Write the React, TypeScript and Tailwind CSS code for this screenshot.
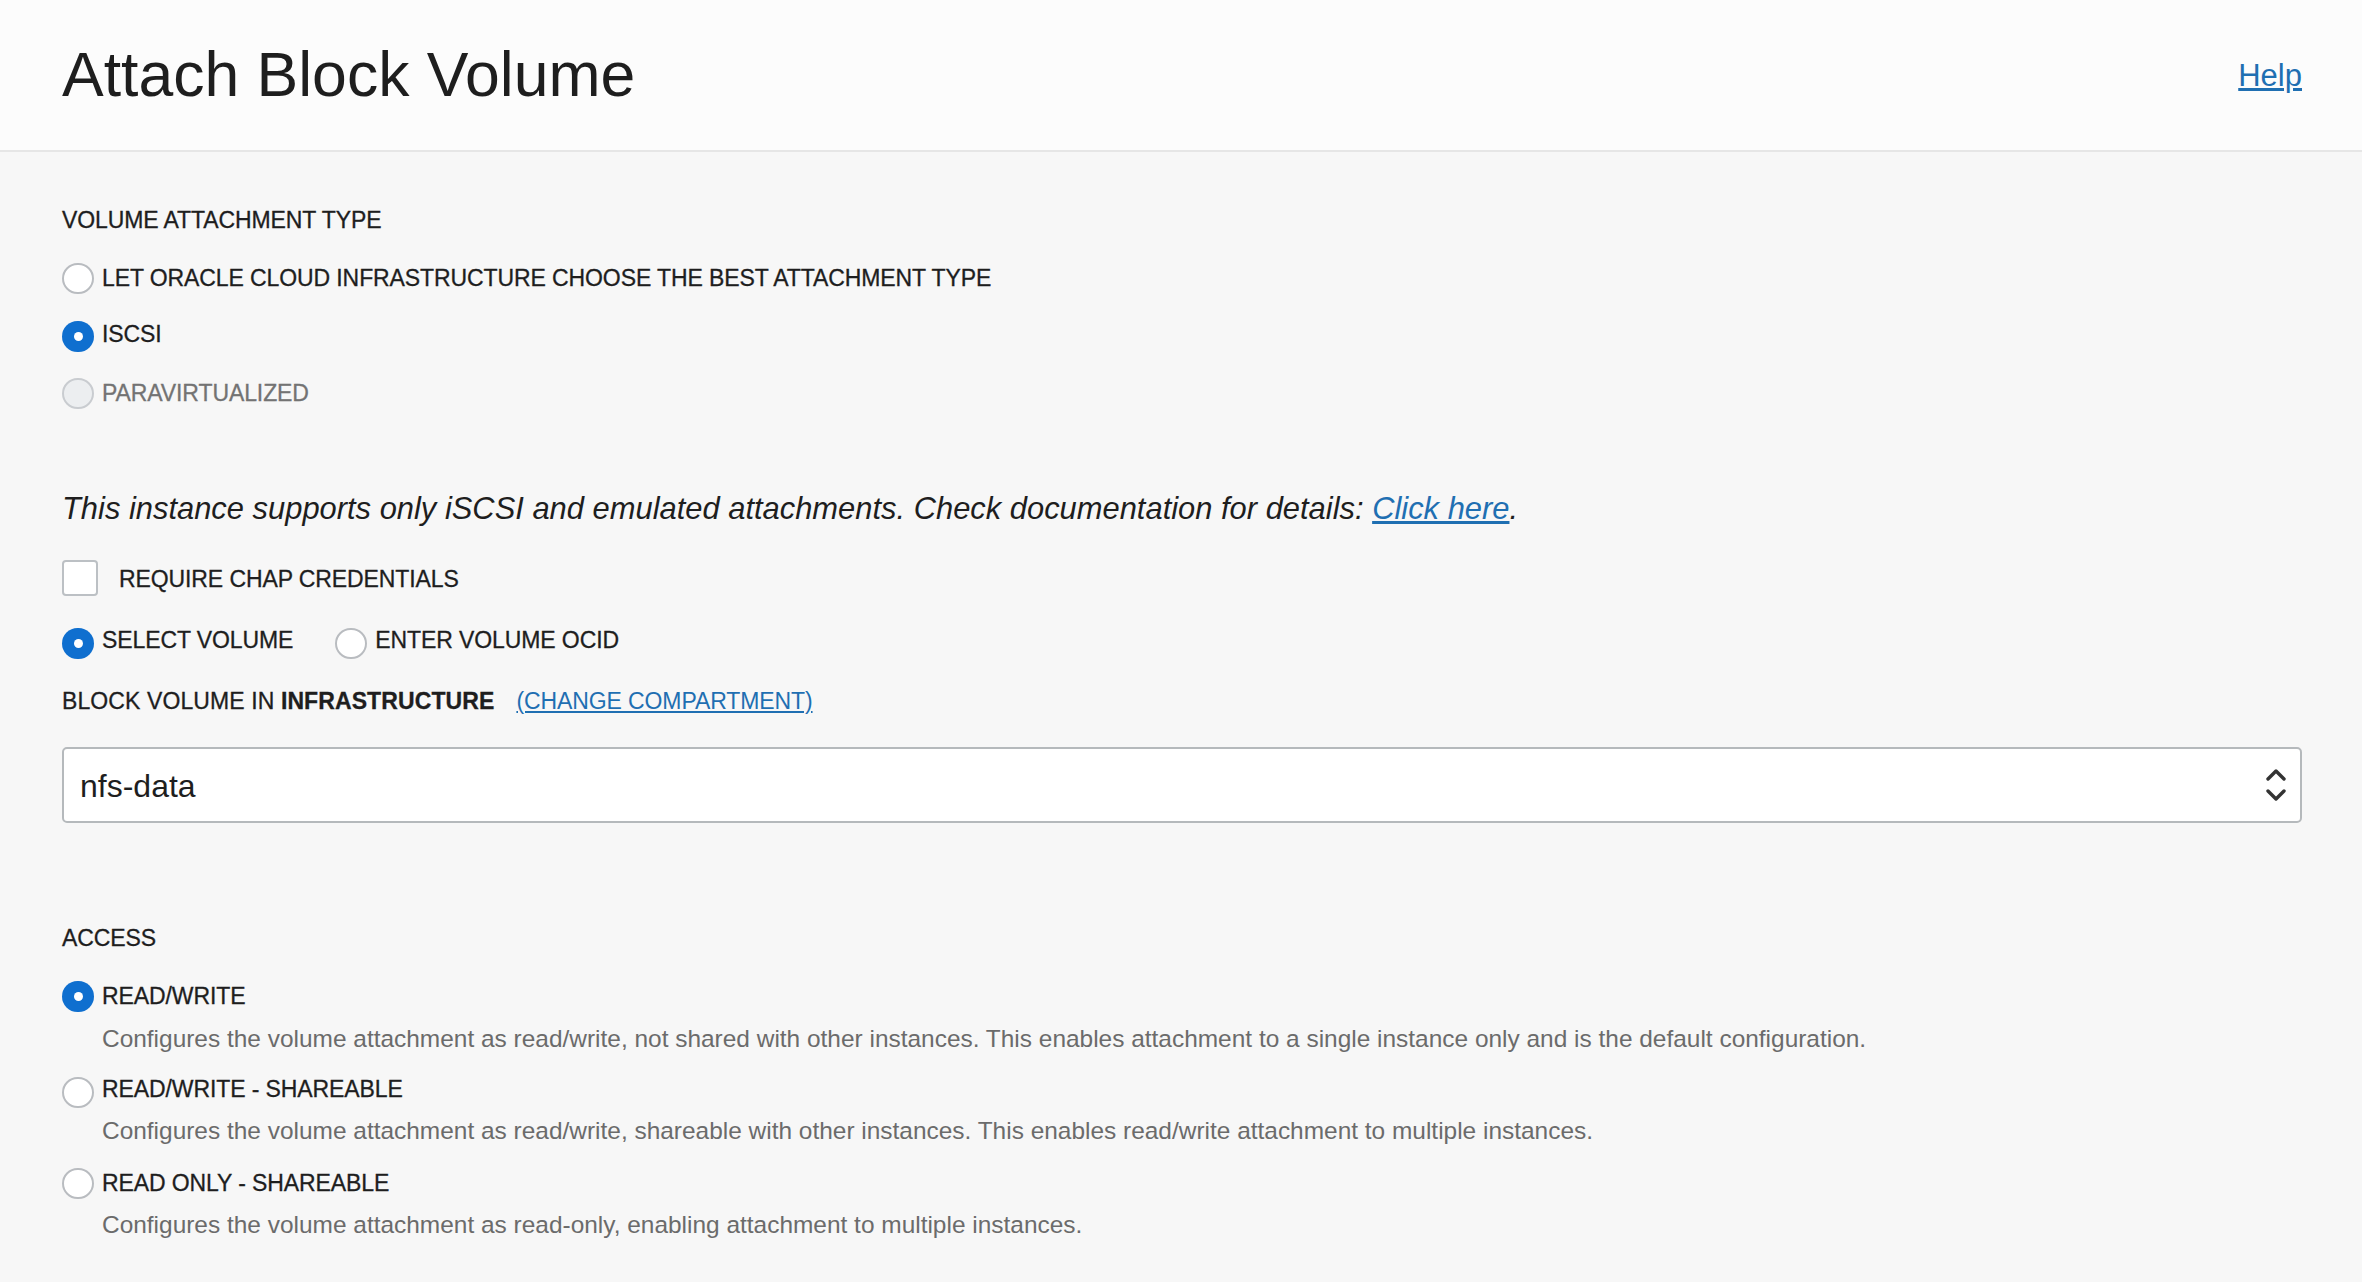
import { ReactNode } from "react";

type RadioProps = {
  state?: "off" | "on" | "disabled";
};

function Radio({ state = "off" }: RadioProps) {
  if (state === "on") {
    return (
      <span className="flex h-[31px] w-[32px] shrink-0 items-center justify-center rounded-full bg-[#0f6fcf]">
        <span className="h-[9px] w-[9px] rounded-full bg-white" />
      </span>
    );
  }
  return (
    <span
      className={
        state === "disabled"
          ? "h-[31px] w-[32px] shrink-0 rounded-full border-2 border-[#c9ccd0] bg-[#eceef0]"
          : "h-[31px] w-[32px] shrink-0 rounded-full border-2 border-[#b9bcc0] bg-white"
      }
    />
  );
}

function Label({ children, muted, className = "" }: { children: ReactNode; muted?: boolean; className?: string }) {
  const color = muted ? "text-[#737373]" : "text-[#1e1e1e]";
  return (
    <span className={`text-[23px] leading-[28px] tracking-[-0.1px] [-webkit-text-stroke:0.3px] ${color} ${className}`}>
      {children}
    </span>
  );
}

function Desc({ children, className = "" }: { children: ReactNode; className?: string }) {
  return <p className={`ml-[40px] text-[24.45px] leading-[30px] text-[#6b6b6b] ${className}`}>{children}</p>;
}

function Chevrons() {
  return (
    <svg width="20" height="36" viewBox="0 0 20 36" fill="none" stroke="#333333" strokeWidth="3.4" strokeLinecap="round" strokeLinejoin="round">
      <path d="M2 12 L10 4 L18 12" />
      <path d="M2 24 L10 32 L18 24" />
    </svg>
  );
}

export default function App() {
  return (
    <div className="min-h-[1282px] bg-[#f7f7f7] font-['Liberation_Sans',Arial,sans-serif]">
      <header className="flex h-[152px] items-center justify-between border-b-2 border-[#e6e6e6] bg-[#fcfcfc] px-[60px]">
        <h1 className="pb-[3px] pl-[2px] text-[62.5px] leading-[72px] text-[#1e1e1e]">Attach Block Volume</h1>
        <a className="pt-[1px] text-[31px] leading-[36px] text-[#1f6fb2] underline">Help</a>
      </header>

      <main className="px-[62px] pr-[60px]">
        <section className="pt-[54px]">
          <h2 className="font-normal"><Label>VOLUME ATTACHMENT TYPE</Label></h2>
          <div className="mt-[28px] flex items-center gap-[8px]"><Radio /><Label className="pb-[1px]">LET ORACLE CLOUD INFRASTRUCTURE CHOOSE THE BEST ATTACHMENT TYPE</Label></div>
          <div className="mt-[26px] flex items-center gap-[8px]"><Radio state="on" /><Label className="pb-[5px]">ISCSI</Label></div>
          <div className="mt-[25px] flex items-center gap-[8px]"><Radio state="disabled" /><Label muted className="pb-[2px]">PARAVIRTUALIZED</Label></div>
        </section>

        <p className="mt-[82px] text-[30.9px] italic leading-[36px] text-[#1e1e1e]">
          This instance supports only iSCSI and emulated attachments. Check documentation for details:{" "}
          <a className="text-[#1f6fb2] underline">Click here</a>.
        </p>

        <div className="mt-[33px] flex items-center gap-[21px]">
          <span className="h-[36px] w-[36px] rounded-[4px] border-2 border-[#bcc0c4] bg-white" />
          <Label className="pt-[2px]">REQUIRE CHAP CREDENTIALS</Label>
        </div>

        <div className="mt-[30px] flex items-center">
          <div className="flex items-center gap-[8px]"><Radio state="on" /><Label className="pb-[6px]">SELECT VOLUME</Label></div>
          <div className="ml-[42px] flex items-center gap-[8px]"><Radio /><Label className="pb-[6px]">ENTER VOLUME OCID</Label></div>
        </div>

        <div className="mt-[27px] flex items-center gap-[22px]">
          <Label className="tracking-[0.1px]">BLOCK VOLUME IN <b>INFRASTRUCTURE</b></Label>
          <a className="text-[23px] leading-[28px] tracking-[-0.1px] text-[#1f6fb2] underline">(CHANGE COMPARTMENT)</a>
        </div>

        <div className="mt-[32px] flex h-[76px] items-center justify-between rounded-[5px] border-2 border-[#b5b9bc] bg-white pl-[16px] pr-[14px]">
          <span className="pt-[2px] text-[32px] text-[#1e1e1e]">nfs-data</span>
          <Chevrons />
        </div>

        <section className="mt-[101px]">
          <h2 className="font-normal"><Label>ACCESS</Label></h2>
          <div className="mt-[28px] flex items-center gap-[8px]"><Radio state="on" /><Label className="pb-[2px]">READ/WRITE</Label></div>
          <Desc className="mt-[12px]">Configures the volume attachment as read/write, not shared with other instances. This enables attachment to a single instance only and is the default configuration.</Desc>
          <div className="mt-[21px] flex items-center gap-[8px]"><Radio /><Label className="pb-[6px]">READ/WRITE - SHAREABLE</Label></div>
          <Desc className="mt-[7px]">Configures the volume attachment as read/write, shareable with other instances. This enables read/write attachment to multiple instances.</Desc>
          <div className="mt-[22px] flex items-center gap-[8px]"><Radio /><Label className="pb-[1px]">READ ONLY - SHAREABLE</Label></div>
          <Desc className="mt-[11px]">Configures the volume attachment as read-only, enabling attachment to multiple instances.</Desc>
        </section>
      </main>
    </div>
  );
}
